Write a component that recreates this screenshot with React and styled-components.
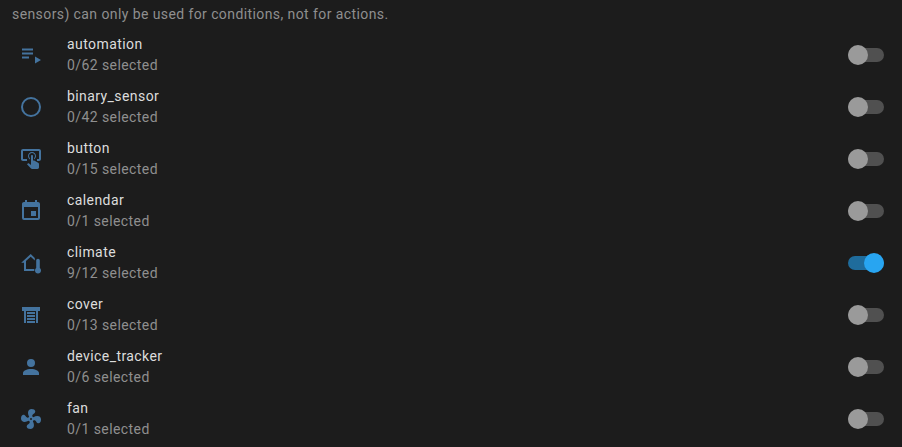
import React from "react";
import styled, { createGlobalStyle } from "styled-components";

const Global = createGlobalStyle`
  html, body { margin: 0; padding: 0; background: #1c1c1c; }
  body { height: 447px; overflow: hidden; font-family: Roboto, "Liberation Sans", sans-serif; }
`;
const Page = styled.div`
  display: flex; flex-direction: column; width: 902px; height: 447px; overflow: hidden; background: #1c1c1c;
`;
const Intro = styled.p`
  margin: 0; padding: 5px 12px 0; height: 29px; box-sizing: border-box;
  font-size: 14px; line-height: 18px; letter-spacing: 0.41px; color: #8f8f8f; white-space: nowrap;
`;
const List = styled.div`display: flex; flex-direction: column;`;
const Row = styled.div`
  display: flex; align-items: center; height: 52px; padding: 0 18px 0 19px;
`;
const IconBox = styled.svg`
  flex: none; width: 24px; height: 24px; margin-right: 24px; fill: #44739e;
`;
const Labels = styled.div`flex: 1; display: flex; flex-direction: column; gap: 1px; min-width: 0; padding-bottom: 2px;`;
const Name = styled.div`
  font-size: 14px; line-height: 20px; letter-spacing: 0.42px; color: #dcdcdc;
`;
const Sub = styled.div`
  font-size: 14px; line-height: 20px; letter-spacing: 0.42px; color: #8f8f8f;
`;
const Toggle = styled.div`
  position: relative; width: 36px; height: 14px; flex: none; border-radius: 7px;
  background: ${p => (p.$on ? "#1f6c9c" : "#505050")};
`;
const Thumb = styled.div`
  position: absolute; top: -3px; width: 20px; height: 20px; border-radius: 50%;
  left: ${p => (p.$on ? "16px" : "0")};
  background: ${p => (p.$on ? "#28a5f1" : "#9a9a9a")};
`;

const Path = ({ d }) => (
  <IconBox viewBox="0 0 24 24"><path d={d} /></IconBox>
);

const icons = {
  automation: "M3 5.5H14V7.4H3V5.5M3 9.5H14V11.4H3V9.5M3 13.5H10V15.4H3V13.5M16 13.5V20.5L22 17L16 13.5Z",
  binary_sensor: "M12,20A8,8 0 0,1 4,12A8,8 0 0,1 12,4A8,8 0 0,1 20,12A8,8 0 0,1 12,20M12,2A10,10 0 0,0 2,12A10,10 0 0,0 12,22A10,10 0 0,0 22,12A10,10 0 0,0 12,2Z",
  button: "M13 5C15.21 5 17 6.79 17 9C17 10.5 16.2 11.77 15 12.46V11.24C15.61 10.69 16 9.89 16 9C16 7.34 14.66 6 13 6S10 7.34 10 9C10 9.89 10.39 10.69 11 11.24V12.46C9.8 11.77 9 10.5 9 9C9 6.79 10.79 5 13 5M20 20.5C19.97 21.32 19.32 21.97 18.5 22H13C12.62 22 12.26 21.85 12 21.57L8 17.37L8.74 16.6C8.93 16.39 9.2 16.28 9.5 16.28H9.7L12 18V9C12 8.45 12.45 8 13 8S14 8.45 14 9V13.47L15.21 13.6L19.15 15.79C19.68 16.03 20 16.56 20 17.14V20.5M20 2H4C2.9 2 2 2.9 2 4V12C2 13.11 2.9 14 4 14H8V12L4 12L4 4H20L20 12H18V14H20V13.96L20.04 14C21.13 14 22 13.09 22 12V4C22 2.9 21.11 2 20 2Z",
  calendar: "M19,19H5V8H19M16,1V3H8V1H6V3H5C3.89,3 3,3.89 3,5V19A2,2 0 0,0 5,21H19A2,2 0 0,0 21,19V5C21,3.89 20.1,3 19,3H18V1M17,12H12V17H17V12Z",
  climate: "M11.7 3L2.2 11.7H5V20.1H15.3V18.1H7V10.1L11.7 5.8L15.8 9.6V7L11.7 3ZM19 7.8C18 7.8 17.2 8.6 17.2 9.6V17C16.5 17.6 16 18.5 16 19.5C16 21.2 17.3 22.5 19 22.5S22 21.2 22 19.5C22 18.5 21.5 17.6 20.8 17V9.6C20.8 8.6 20 7.8 19 7.8Z",
  cover: "M3 4H21V8H19V20H17V8H7V20H5V8H3V4M8 9H16V11H8V9M8 12H16V14H8V12M8 15H16V17H8V15M8 18H16V20H8V18Z",
  device_tracker: "M12,4A4,4 0 0,1 16,8A4,4 0 0,1 12,12A4,4 0 0,1 8,8A4,4 0 0,1 12,4M12,14C16.42,14 20,15.79 20,18V20H4V18C4,15.79 7.58,14 12,14Z",
  fan: "M12,11A1,1 0 0,0 11,12A1,1 0 0,0 12,13A1,1 0 0,0 13,12A1,1 0 0,0 12,11M12.5,2C17,2 17.11,5.57 14.75,6.75C13.76,7.24 13.32,8.29 13.13,9.22C13.61,9.42 14.03,9.73 14.35,10.13C18.05,8.13 22.03,8.92 22.03,12.5C22.03,17 18.46,17.1 17.28,14.73C16.78,13.74 15.72,13.3 14.79,13.11C14.59,13.59 14.28,14 13.88,14.34C15.87,18.03 15.08,22 11.5,22C7,22 6.91,18.42 9.27,17.24C10.25,16.75 10.69,15.71 10.89,14.79C10.4,14.59 9.97,14.27 9.65,13.87C5.96,15.85 2,15.07 2,11.5C2,7 5.56,6.89 6.74,9.26C7.24,10.25 8.29,10.68 9.22,10.87C9.41,10.39 9.73,9.97 10.14,9.65C8.15,5.96 8.94,2 12.5,2Z",
};

const rows = [
  ["automation", "0/62 selected", false],
  ["binary_sensor", "0/42 selected", false],
  ["button", "0/15 selected", false],
  ["calendar", "0/1 selected", false],
  ["climate", "9/12 selected", true],
  ["cover", "0/13 selected", false],
  ["device_tracker", "0/6 selected", false],
  ["fan", "0/1 selected", false],
];

export default function App() {
  return (
    <Page>
      <Global />
      <Intro>sensors) can only be used for conditions, not for actions.</Intro>
      <List>
        {rows.map(([name, sub, on]) => (
          <Row key={name}>
            <Path d={icons[name]} />
            <Labels>
              <Name>{name}</Name>
              <Sub>{sub}</Sub>
            </Labels>
            <Toggle $on={on}><Thumb $on={on} /></Toggle>
          </Row>
        ))}
      </List>
    </Page>
  );
}
